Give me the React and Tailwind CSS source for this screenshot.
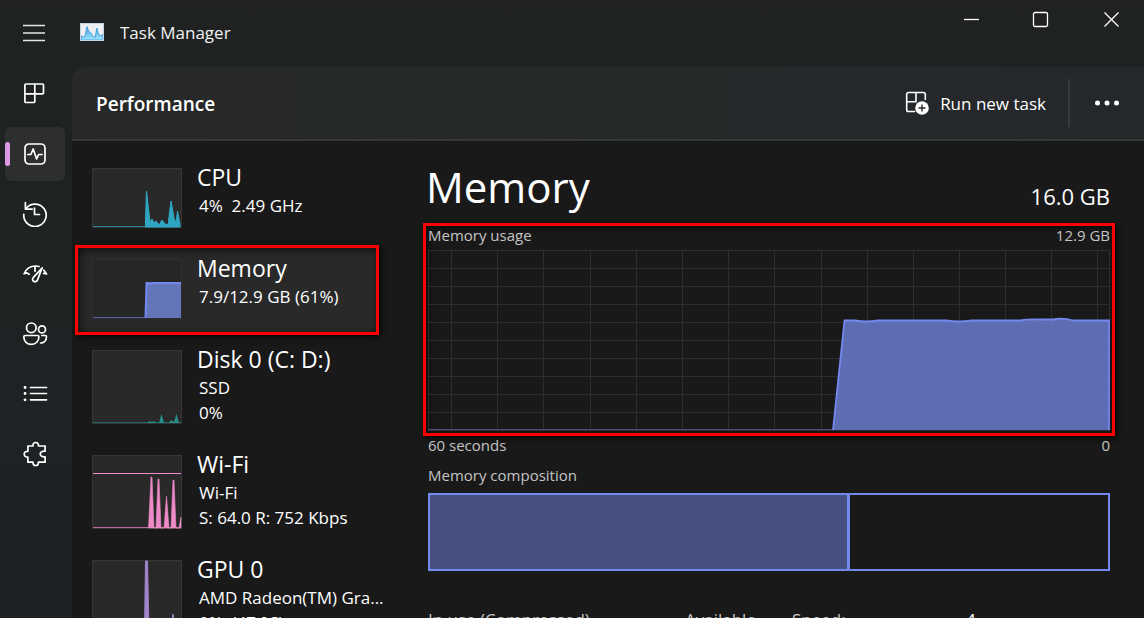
const stroke = {
  fill: "none",
  stroke: "#ffffff",
  strokeWidth: 1.7,
  strokeLinecap: "round",
  strokeLinejoin: "round",
};

function Icon({ children }) {
  return (
    <svg width="26" height="26" viewBox="0 0 26 26" aria-hidden="true" {...stroke}>
      {children}
    </svg>
  );
}

const NAV = [
  {
    label: "Processes",
    icon: (
      <path d="M3.9 3h16.6a1 1 0 0 1 1 1v7.8a1 1 0 0 1-1 1h-7.7v7.7a1 1 0 0 1-1 1H3.9a1 1 0 0 1-1-1V4a1 1 0 0 1 1-1zM12.8 3v9.8H3" />
    ),
  },
  {
    label: "Performance",
    active: true,
    icon: (
      <>
        <rect x="3" y="3" width="20" height="20" rx="4" />
        <path d="M5.800 13.500h3l2.400-5.500 3.400 10 2-4.500h3.400" />
      </>
    ),
  },
  {
    label: "App history",
    icon: (
      <>
        <path d="M3.400 1.500v6.600h6.800M3.800 7.800a11.200 11.200 0 1 1-2 5.500" />
        <path d="M12.500 7v6.500h5" />
      </>
    ),
  },
  {
    label: "Startup apps",
    icon: (
      <>
        <path d="M2.300 12.500C4 8.500 8 5 13.500 5l3.600.5M2 12.800l2.900-.9 2.200 1.400M13 5.300v5M21.800 9.200l2.800 3.800-3-.6" />
        <path d="M20.300 6.800l-8.900 9.600a2.500 2.500 0 1 0 4 2.800L20.300 6.800z" />
      </>
    ),
  },
  {
    label: "Users",
    icon: (
      <>
        <circle cx="9.300" cy="6.800" r="4.800" />
        <circle cx="20" cy="8.400" r="3.500" />
        <path d="M3.200 14.500h12.500a1.200 1.200 0 0 1 1.200 1.200c0 4.600-3.200 7.700-7.500 7.700s-7.600-3.100-7.600-7.700a1.200 1.200 0 0 1 1.400-1.200zM19.800 14.500h3.700a1 1 0 0 1 1 1c0 4.300-2.700 6.500-5.900 6.500" />
      </>
    ),
  },
  {
    label: "Details",
    icon: (
      <>
        <path d="M8.500 6.500h16M8.500 12.500h16M8.500 18.800h16" />
        <path d="M3 6.500h.1M3 12.500h.1M3 18.800h.1" strokeWidth="2.800" />
      </>
    ),
  },
  {
    label: "Services",
    icon: (
      <path d="M5.900 5h5.100c-.3-2 .8-3.500 2.700-3.500S16.700 3 16.400 5h6.700v5.200c-2.500-.4-4.900.7-4.900 2.800s2.400 3.200 4.900 2.800v5.400H16.400c.3 2-.8 3.300-2.700 3.300s-3-1.300-2.700-3.300H5.900V16c-2.200.2-3.700-1-3.700-2.900s1.500-3 3.700-2.700z" />
    ),
  },
];

function NavRail() {
  return (
    <nav aria-label="Pages" className="flex w-18 shrink-0 flex-col items-center gap-1.5 pt-1.5 pr-0.5">
      <button aria-label="Menu" className="mb-px flex h-[54px] w-15 items-center justify-center pr-0.5">
        <svg width="22" height="18" viewBox="0 0 22 18" stroke="#e4e6e5" strokeWidth="1.6" aria-hidden="true">
          <path d="M0 1.500h22M0 9h22M0 16.500h22" />
        </svg>
      </button>
      {NAV.map((item) => (
        <button
          key={item.label}
          aria-label={item.label}
          className={
            item.active
              ? "flex h-[54px] w-15 items-center justify-between rounded-md bg-[#2d2f2f]"
              : "flex h-[54px] w-15 items-center justify-center"
          }
        >
          {item.active && <span className="h-6 w-[5px] rounded-full bg-[#dc9ae4]" />}
          <Icon>{item.icon}</Icon>
          {item.active && <span className="w-[5px]" />}
        </button>
      ))}
    </nav>
  );
}

function TitleBar() {
  return (
    <header className="flex h-[67px] shrink-0 items-start justify-between">
      <div className="flex h-16 items-center gap-4 pl-2">
        <svg width="24" height="18" viewBox="0 0 24 18" aria-hidden="true">
          <defs>
            <linearGradient id="logo" x1="0" y1="0" x2="0" y2="1">
              <stop offset="0" stopColor="#3f9fe0" />
              <stop offset="1" stopColor="#a4e6fc" />
            </linearGradient>
          </defs>
          <rect width="24" height="18" fill="#eceef2" />
          <path
            d="M1 13l3 1.500L5.500 11 7 3.500 8.500 8l2 1.500 3 4.500 1.500.5L17 5l1 5 2 3 3-1.500V17H1z"
            fill="url(#logo)"
            stroke="#2f95dc"
            strokeWidth=".8"
          />
          <rect x=".5" y=".5" width="23" height="17" fill="none" stroke="#c3d3df" />
        </svg>
        <span className="pt-0.5 text-[17px] leading-6 text-[#f1f1f1]">Task Manager</span>
      </div>
      <div className="flex h-[38px] items-center gap-[25px] pr-2.5">
        {[
          ["Minimize", <path key="p" d="M4 11.500h15" />],
          ["Maximize", <rect key="p" x="3.500" y="4.500" width="14" height="14" rx="1.500" />],
          ["Close", <path key="p" d="M4.500 4.500l14 14M18.500 4.500l-14 14" />],
        ].map(([label, shape]) => (
          <button key={label} aria-label={label} className="flex w-[45px] justify-center">
            <svg width="23" height="23" viewBox="0 0 23 23" fill="none" stroke="#fff" strokeWidth="1.300" aria-hidden="true">
              {shape}
            </svg>
          </button>
        ))}
      </div>
    </header>
  );
}

function CommandBar() {
  return (
    <div className="flex h-[74px] shrink-0 items-center justify-between border-b-2 border-[#343938] bg-linear-to-r from-[#272928] to-[#25282b] pl-6">
      <h1 className="pt-0.5 text-[19px] leading-7 font-semibold text-white">Performance</h1>
      <div className="flex items-center">
        <button className="flex items-center gap-[11px] pr-[22px] text-[17px] leading-6 text-white">
          <svg width="24" height="24" viewBox="0 0 24 24" aria-hidden="true">
            <g {...stroke} strokeWidth="1.600">
              <path d="M9.500 20.500H3.500A1.800 1.800 0 0 1 1.700 18.700V3.300A1.800 1.800 0 0 1 3.500 1.500h15a1.800 1.800 0 0 1 1.800 1.800V8.500M11 1.500v9.300H1.700" />
            </g>
            <circle cx="17" cy="17" r="6.800" fill="#fff" />
            <path d="M17 13.500v7M13.500 17h7" stroke="#25292a" strokeWidth="1.400" />
          </svg>
          <span className="pt-0.5">Run new task</span>
        </button>
        <span className="h-12 w-0.5 bg-[#363a3b]" />
        <button aria-label="See more" className="flex w-[74px] justify-center">
          <svg width="26" height="6" viewBox="0 0 26 6" fill="#fff" aria-hidden="true">
            <circle cx="3.500" cy="3" r="2.500" />
            <circle cx="13" cy="3" r="2.500" />
            <circle cx="22.500" cy="3" r="2.500" />
          </svg>
        </button>
      </div>
    </div>
  );
}

const DEVICES = [
  {
    name: "CPU",
    lines: ["4%  2.49 GHz"],
    chart: (
      <>
        <path d="M1 58.500h52" stroke="#2b7f92" />
        <path
          d="M53.500 59V52L54.500 23 58 54 60 51 62 55 64 53 67 57 70 52 73 56 76 57 79 33 82 50 84 55 85.500 43 88 56V59z"
          fill="#2fa5c1"
          stroke="#2fa9c6"
        />
      </>
    ),
  },
  {
    name: "Memory",
    lines: ["7.9/12.9 GB (61%)"],
    selected: true,
    chart: (
      <>
        <path d="M1 58.500h52" stroke="#5560a5" />
        <path d="M53.500 59L54.500 24H57L58 25 60 24H89V59z" fill="#6575ba" />
        <path d="M53.500 59L54.500 24H57L58 25 60 24H89" fill="none" stroke="#7389ef" strokeWidth="2" />
      </>
    ),
  },
  {
    name: "Disk 0 (C: D:)",
    lines: ["SSD", "0%"],
    chart: (
      <>
        <path d="M1 72.500h88" stroke="#1d6665" />
        <path
          d="M56 73L57 71 60 72 62 71 64 73H67L69.500 64 72 73H77L79 70 82 72 84.500 64 87 73z"
          fill="#26908f"
        />
      </>
    ),
  },
  {
    name: "Wi-Fi",
    lines: ["Wi-Fi", "S: 64.0 R: 752 Kbps"],
    chart: (
      <>
        <path d="M1 18.500h88" stroke="#f08cca" />
        <path d="M1 72.500h88" stroke="#b86b9d" />
        <path
          d="M56.500 73L59 22H60L62 73H64L66 24H67L69 73H72L74.500 41 77 73H79L81 25H82L84 73H87L89 62V73z"
          fill="#ef8ac8"
          stroke="#ef8ac8"
          strokeWidth=".6"
        />
      </>
    ),
  },
  {
    name: "GPU 0",
    lines: ["AMD Radeon(TM) Gra...", "0%  (47 °C)"],
    chart: (
      <>
        <path d="M1 72.500h88" stroke="#6d5a8c" />
        <path d="M52.500 73L53.500 1H55.500L57 73zM78 73L81 54 83 73z" fill="#a184cc" stroke="#a184cc" />
      </>
    ),
  },
];

function DeviceList() {
  return (
    <ul className="flex w-[312px] shrink-0 flex-col pt-3 pl-[3px]">
      {DEVICES.map((device) => {
        const height = device.lines.length > 1 ? 74 : 60;
        return (
          <li key={device.name} className={device.lines.length > 1 ? "h-[105px] shrink-0" : "h-[91px] shrink-0"}>
            <button
              aria-pressed={!!device.selected}
              className={
                device.selected
                  ? "mt-px flex h-[90px] w-[304px] items-start gap-[15px] border-3 border-[#fe0000] bg-[#292929] pt-[11px] pl-3.5 text-left shadow-[2px_2px_6px_rgba(0,0,0,0.8),inset_2px_2px_8px_rgba(0,0,0,0.6)]"
                  : "flex w-full items-start gap-[15px] pt-[15px] pl-[17px] text-left"
              }
            >
              <svg width="90" height={height} viewBox={`0 0 90 ${height}`} className="shrink-0" aria-hidden="true">
                <rect
                  x=".5"
                  y=".5"
                  width="89"
                  height={height - 1}
                  fill={device.selected ? "#262626" : "#292929"}
                  stroke={device.selected ? "#2e2e2e" : "#363636"}
                />
                {device.chart}
              </svg>
              <span className="-mt-1.5 flex min-w-0 flex-col">
                <span className="mb-px text-[23px] leading-[30px] whitespace-nowrap text-white">{device.name}</span>
                {device.lines.map((line) => (
                  <span key={line} className="pl-0.5 text-[17px] leading-[25px] whitespace-pre text-white">
                    {line}
                  </span>
                ))}
              </span>
            </button>
          </li>
        );
      })}
    </ul>
  );
}

const COLUMNS = [23, 69, 115, 162, 208, 254, 300, 346, 393, 439, 485, 531, 577, 623, 669];
const ROWS = [18, 36, 54, 72, 90, 108, 126, 144, 162];
const USAGE = "M405 180L416.500 70.500H427Q438 72.500 450 70.500H518Q531 72.500 544 70.500H592Q600 69 610 69.500H625Q635 67.500 645 70.500H681";

function UsageChart() {
  return (
    <svg className="block h-[181px] w-full" viewBox="0 0 682 181" preserveAspectRatio="none" role="img" aria-label="Memory usage over 60 seconds">
      <g stroke="#2d2d2d" fill="none">
        <rect x=".5" y=".5" width="681" height="180" />
        {COLUMNS.map((x) => (
          <path key={x} d={`M${x + 0.5} 0V180`} />
        ))}
        {ROWS.map((y) => (
          <path key={y} d={`M0 ${y + 0.5}H681`} />
        ))}
      </g>
      <path d="M0 179.500H405" stroke="#4a5180" />
      <path d={`${USAGE}V180z`} fill="#6b7dd0" fillOpacity=".84" />
      <path d={`${USAGE}V180`} fill="none" stroke="#7389ef" strokeWidth="1.800" />
    </svg>
  );
}

function MemoryPanel() {
  return (
    <section className="flex min-w-0 flex-1 flex-col pt-4 pr-[29px] pl-[39px]">
      <div className="flex shrink-0 items-end justify-between pr-[5px] pl-[3px]">
        <h2 className="pb-0.5 text-[42px] leading-[60px] text-white">Memory</h2>
        <span className="pb-1.5 text-[22px] leading-[34px] text-white">16.0 GB</span>
      </div>
      <div className="mt-1 shrink-0 border-3 border-[#fe0000] px-0.5 pb-0.5 shadow-[2px_2px_6px_rgba(0,0,0,0.8),inset_2px_2px_6px_rgba(0,0,0,0.6)]">
        <div className="flex justify-between pb-1.5 text-[15px] leading-[18px] text-[#c4c4c4]">
          <span>Memory usage</span>
          <span>12.9 GB</span>
        </div>
        <UsageChart />
      </div>
      <div className="flex shrink-0 justify-between px-[5px] text-[15px] leading-[18px] text-[#c4c4c4]">
        <span>60 seconds</span>
        <span>0</span>
      </div>
      <h3 className="mt-3 shrink-0 px-[5px] text-[15px] leading-[18px] text-[#c4c4c4]">Memory composition</h3>
      <div className="mx-[5px] mt-[9px] flex h-[78px] shrink-0 border-2 border-[#7389ef]">
        <div className="w-[62%] border-r-3 border-[#7389ef] bg-[#46507e]" />
      </div>
      <dl className="mt-[37px] flex shrink-0 px-[5px] text-[17px] leading-6 whitespace-nowrap text-[#c4c4c4]">
        <dt className="w-[257px]">In use (Compressed)</dt>
        <dt className="w-[107px]">Available</dt>
        <dt className="w-[174px]">Speed:</dt>
        <dd className="text-white">4</dd>
      </dl>
    </section>
  );
}

export default function App() {
  return (
    <div className="flex h-screen overflow-hidden bg-linear-to-b from-[#202222] to-[#1c2224] font-['Open_Sans','Noto_Sans',sans-serif]">
      <NavRail />
      <div className="flex min-w-0 flex-1 flex-col">
        <TitleBar />
        <main className="flex min-h-0 flex-1 flex-col overflow-hidden rounded-tl-xl bg-[#191919]">
          <CommandBar />
          <div className="flex min-h-0 flex-1 overflow-hidden">
            <DeviceList />
            <MemoryPanel />
          </div>
        </main>
      </div>
    </div>
  );
}
